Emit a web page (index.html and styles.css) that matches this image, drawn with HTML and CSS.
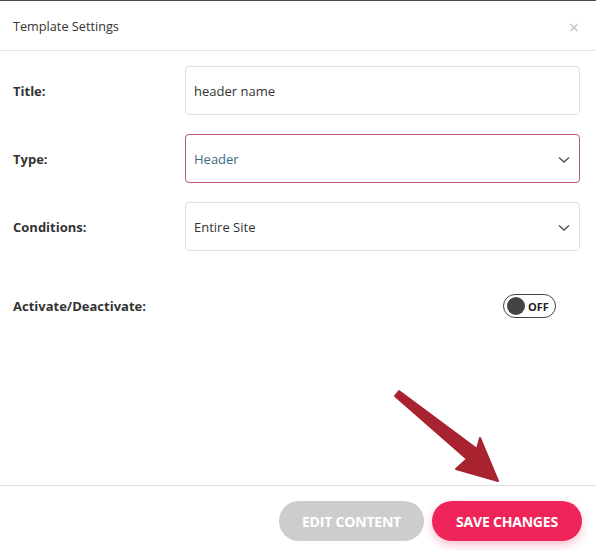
FILE: index.html
```html
<!DOCTYPE html>
<html lang="en">
<head>
<meta charset="utf-8">
<title>Template Settings</title>
<link rel="stylesheet" href="styles.css">
</head>
<body>
<div class="modal">
  <div class="modal-header">
    <span class="modal-title">Template Settings</span>
    <span class="close">&times;</span>
  </div>
  <div class="modal-body">
    <div class="row">
      <label class="label">Title:</label>
      <div class="field"><span class="value">header name</span></div>
    </div>
    <div class="row">
      <label class="label">Type:</label>
      <div class="field select active">
        <span class="value blue">Header</span>
        <svg class="chev" width="12" height="8" viewBox="0 0 12 8"><path d="M1 1.5 L6 6 L11 1.5" fill="none" stroke="#555" stroke-width="1.5"/></svg>
      </div>
    </div>
    <div class="row">
      <label class="label">Conditions:</label>
      <div class="field select">
        <span class="value">Entire Site</span>
        <svg class="chev" width="12" height="8" viewBox="0 0 12 8"><path d="M1 1.5 L6 6 L11 1.5" fill="none" stroke="#555" stroke-width="1.5"/></svg>
      </div>
    </div>
    <div class="row toggle-row">
      <label class="label">Activate/Deactivate:</label>
      <div class="toggle-wrap">
        <div class="toggle"><span class="knob"></span><span class="toggle-text">OFF</span></div>
      </div>
    </div>
  </div>
  <div class="modal-footer">
    <button class="btn btn-grey">EDIT CONTENT</button>
    <button class="btn btn-save">SAVE CHANGES</button>
  </div>
  <svg class="arrow" width="596" height="551" viewBox="0 0 596 551">
    <polygon points="399,391 477,449 480,438 498,481 456,469 467,459 395,396" fill="#a8222f" stroke="#a8222f" stroke-width="2" stroke-linejoin="round"/>
  </svg>
</div>
</body>
</html>
```

FILE: styles.css
```css
* { box-sizing: border-box; }
html, body { margin: 0; padding: 0; background: #fff; }
body {
  font-family: "Open Sans", "Liberation Sans", sans-serif;
  color: #333;
  width: 596px;
  height: 551px;
  overflow: hidden;
}
.modal {
  position: relative;
  width: 596px;
  height: 551px;
  background: #fff;
  border-top: 1px solid #4a4a4a;
  display: flex;
  flex-direction: column;
}
.modal-header {
  height: 50px;
  border-bottom: 1px solid #e3e3e3;
  display: flex;
  align-items: center;
  justify-content: space-between;
  padding: 0 17px 0 13px;
}
.modal-title {
  font-size: 12.7px;
  color: #333;
}
.close {
  font-size: 18px;
  color: #c0c0c0;
  line-height: 1;
  margin-top: 2px;
}
.modal-body {
  flex: 1;
  padding: 15px 16px 0 13px;
  display: flex;
  flex-direction: column;
  gap: 19px;
}
.row {
  display: flex;
  align-items: center;
}
.label {
  width: 172px;
  flex: none;
  font-size: 13px;
  font-weight: 700;
  color: #333;
}
.field {
  flex: 1;
  height: 49px;
  border: 1px solid #dedede;
  border-radius: 4px;
  display: flex;
  align-items: center;
  padding: 0 9px 0 8px;
}
.field.active { border-color: #bd5777; }
.select { justify-content: space-between; }
.value { font-size: 13px; color: #333; }
.value.blue { color: #3d6b82; }
.chev { margin-top: 2px; }
.toggle-row { margin-top: 24px; }
.toggle-wrap {
  flex: 1;
  display: flex;
  justify-content: flex-end;
  padding-right: 24px;
}
.toggle {
  width: 53px;
  height: 24px;
  border: 1.5px solid #444;
  border-radius: 12px;
  display: flex;
  align-items: center;
  padding-left: 3px;
  gap: 3px;
}
.knob {
  width: 18px;
  height: 18px;
  border-radius: 50%;
  background: #444;
}
.toggle-text {
  font-size: 11px;
  font-weight: 700;
  color: #222;
}
.modal-footer {
  height: 66px;
  border-top: 1px solid #e0e0e0;
  display: flex;
  justify-content: flex-end;
  align-items: flex-start;
  padding: 15px 14px 0 0;
  gap: 8px;
}
.btn {
  height: 40px;
  border: none;
  border-radius: 20px;
  font-family: "Open Sans", "Liberation Sans", sans-serif;
  font-size: 14px;
  font-weight: 700;
  color: #fff;
  letter-spacing: -0.2px;
}
.btn-grey { width: 145px; background: #cdcdcd; }
.btn-save {
  width: 150px;
  background: #ef2559;
  box-shadow: 0 4px 10px rgba(239, 37, 89, 0.28);
}
.arrow {
  position: absolute;
  left: 0;
  top: -1px;
  pointer-events: none;
}
```
